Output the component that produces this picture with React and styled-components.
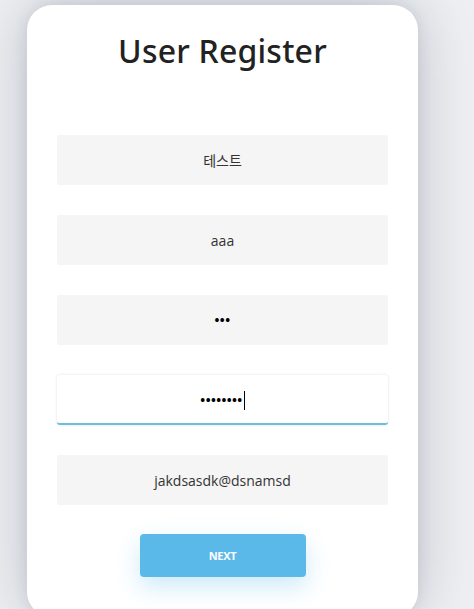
import React from "react";
import styled, { createGlobalStyle } from "styled-components";

const GlobalStyle = createGlobalStyle`
  html, body {
    margin: 0;
    padding: 0;
    height: 100%;
    overflow: hidden;
    background: #eef0f3;
    font-family: "Open Sans", "Noto Sans", "Noto Sans CJK KR", sans-serif;
  }
`;

const fields = [
  { id: "name", text: "테스트" },
  { id: "userId", text: "aaa" },
  { id: "password", text: "•••", secret: true },
  { id: "passwordCheck", text: "••••••••", secret: true, active: true },
  { id: "email", text: "jakdsasdk@dsnamsd" },
];

const App = () => {
  return (
    <>
      <GlobalStyle />
      <Page>
        <Card>
          <Title>User Register</Title>
          <Form>
            {fields.map((f) => (
              <Field key={f.id} $active={f.active}>
                <FieldText $secret={f.secret}>{f.text}</FieldText>
                {f.active && <Caret />}
              </Field>
            ))}
          </Form>
          <NextButton>NEXT</NextButton>
        </Card>
      </Page>
    </>
  );
};

const Page = styled.div`
  height: 100vh;
  padding: 5px 0 0 27px;
  box-sizing: border-box;
`;

const Card = styled.div`
  width: 391px;
  height: 612px;
  box-sizing: border-box;
  background: #ffffff;
  border-radius: 25px;
  box-shadow: 0 0 60px rgba(80, 90, 110, 0.32), 0 0 14px rgba(80, 90, 110, 0.12);
  padding: 26px 30px 0 30px;
  display: flex;
  flex-direction: column;
  align-items: center;
`;

const Title = styled.h1`
  margin: 0;
  font-family: "Noto Sans", "Open Sans", sans-serif;
  font-size: 32px;
  font-weight: 500;
  color: #222;
  line-height: 40px;
  letter-spacing: 0.2px;
`;

const Form = styled.div`
  margin-top: 64px;
  width: 100%;
  display: flex;
  flex-direction: column;
  gap: 30px;
`;

const Field = styled.div`
  height: 50px;
  box-sizing: border-box;
  border-radius: 3px;
  background: ${({ $active }) => ($active ? "#ffffff" : "#f5f5f5")};
  border-bottom: ${({ $active }) => ($active ? "2px solid #6cbfdc" : "none")};
  box-shadow: ${({ $active }) =>
    $active ? "0 0 3px rgba(0, 0, 0, 0.12)" : "none"};
  display: flex;
  align-items: center;
  justify-content: center;
  padding-top: ${({ $active }) => ($active ? "2px" : "0")};
`;

const FieldText = styled.span`
  font-size: ${({ $secret }) => ($secret ? "13px" : "14px")};
  font-weight: ${({ $secret }) => ($secret ? 700 : 400)};
  color: ${({ $secret }) => ($secret ? "#000" : "#333")};
  letter-spacing: ${({ $secret }) => ($secret ? "0.4px" : "0")};
`;

const Caret = styled.span`
  width: 1px;
  height: 19px;
  margin-left: 1px;
  background: #000;
`;

const NextButton = styled.button`
  margin-top: 29px;
  width: 166px;
  height: 43px;
  border: none;
  border-radius: 4px;
  background: #5bb9ea;
  color: #ffffff;
  font-family: inherit;
  font-size: 11px;
  font-weight: 700;
  letter-spacing: -0.3px;
  box-shadow: 0 10px 24px rgba(91, 185, 234, 0.3);
`;

export default App;
